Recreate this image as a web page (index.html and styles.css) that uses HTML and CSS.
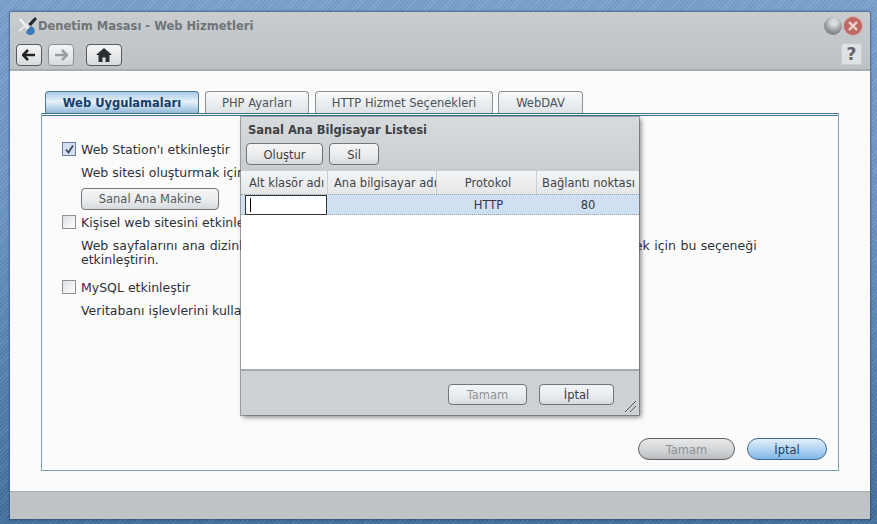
FILE: index.html
```html
<!DOCTYPE html>
<html lang="tr">
<head>
<meta charset="utf-8">
<title>Web Hizmetleri</title>
<link rel="stylesheet" href="styles.css">
</head>
<body>
<div class="window">
  <header class="head">
    <div class="titlebar">
      <svg class="logo" width="20" height="20" viewBox="0 0 20 20"><path d="M2 3l12 14" stroke="#f4f4f4" stroke-width="2.4"/><path d="M1 15L13 5" stroke="#e8e8e8" stroke-width="2"/><path d="M10 8l7-7 2 2-6 7z" fill="#23282e"/><path d="M9 14l4-4 3 2 1 4-3 3h-3l-3-2z" fill="#3f78b8"/></svg>
      <span class="title">Denetim Masası - Web Hizmetleri</span>
      <span class="spacer"></span>
      <span class="orb orb-grey"></span>
      <span class="orb orb-red"><svg width="12" height="12" viewBox="0 0 12 12"><path d="M2 2l8 8M10 2l-8 8" stroke="#f0d4cf" stroke-width="2.4"/></svg></span>
    </div>
    <div class="toolbar">
      <button class="tool"><svg width="14" height="12" viewBox="0 0 14 12"><path d="M6 1L1 6l5 5M1.500 6H13" fill="none" stroke="#222" stroke-width="2.600"/></svg></button>
      <button class="tool tool-off"><svg width="14" height="12" viewBox="0 0 14 12"><path d="M8 1l5 5-5 5M12.500 6H1" fill="none" stroke="#9a9ea2" stroke-width="2.600"/></svg></button>
      <button class="tool tool-home"><svg width="16" height="14" viewBox="0 0 16 14"><path d="M8 0L0 7h2.500v7h4V9.500h3V14h4V7H16z" fill="#2a2e32"/></svg></button>
      <span class="spacer"></span>
      <button class="help">?</button>
    </div>
  </header>
  <main class="content">
    <nav class="tabs">
      <span class="tab tab-on">Web Uygulamaları</span>
      <span class="tab tab-php">PHP Ayarları</span>
      <span class="tab tab-http">HTTP Hizmet Seçenekleri</span>
      <span class="tab tab-dav">WebDAV</span>
    </nav>
    <section class="panel">
      <div class="form">
        <label class="check"><span class="box box-on"><svg width="11" height="11" viewBox="0 0 11 11"><path d="M2 5.500l2.500 3L9 1.500" fill="none" stroke="#3b4a63" stroke-width="1.800"/></svg></span>Web Station'ı etkinleştir</label>
        <p class="line">Web sitesi oluşturmak için</p>
        <button class="btn btn-host">Sanal Ana Makine</button>
        <label class="check check-2"><span class="box"></span>Kişisel web sitesini etkinleştir</label>
        <p class="para">Web sayfalarını ana dizinlerinde yayınlamak için sistemdeki yerel kullanıcılara izin vermek için bu seçeneği<br>etkinleştirin.</p>
        <label class="check check-3"><span class="box"></span>MySQL etkinleştir</label>
        <p class="line">Veritabanı işlevlerini kullanmak için</p>
      </div>
      <div class="actions">
        <button class="pill pill-off">Tamam</button>
        <button class="pill pill-on">İptal</button>
      </div>
    </section>
  </main>
  <footer class="foot"></footer>
</div>

<div class="dialog">
  <div class="dlg-head">
    <div class="dlg-title">Sanal Ana Bilgisayar Listesi</div>
    <div class="dlg-tools">
      <button class="btn btn-create">Oluştur</button>
      <button class="btn btn-del">Sil</button>
    </div>
  </div>
  <div class="grid grid-head">
    <span class="cell cell-first">Alt klasör adı</span>
    <span class="cell">Ana bilgisayar adı</span>
    <span class="cell cell-c cell-proto">Protokol</span>
    <span class="cell cell-last">Bağlantı noktası</span>
  </div>
  <div class="grid grid-row">
    <span class="edit"><i class="caret"></i></span>
    <span></span>
    <span class="cell-c cell-proto">HTTP</span>
    <span class="cell-c">80</span>
  </div>
  <div class="dlg-body"></div>
  <div class="dlg-foot">
    <button class="btn btn-ok">Tamam</button>
    <button class="btn btn-cancel">İptal</button>
    <svg class="grip" width="11" height="11" viewBox="0 0 11 11"><path d="M0 11L11 0M5 11l6-6" stroke="#555" stroke-width="1"/></svg>
  </div>
</div>
</body>
</html>
```

FILE: styles.css
```css
* { box-sizing: border-box; }
html, body { margin: 0; height: 100%; }
body {
  position: relative;
  width: 877px;
  height: 524px;
  overflow: hidden;
  font-family: "DejaVu Sans", sans-serif;
  font-size: 12.500px;
  color: #2c3238;
  background:
    repeating-linear-gradient(135deg, rgba(255, 255, 255, .07) 0 1px, rgba(0, 0, 0, .05) 1px 3px),
    linear-gradient(180deg, #7ba3d1 0%, #6d97c8 40%, #44719f 100%);
}
button { font: inherit; margin: 0; padding: 0; }
.spacer { flex: 1; }

.window {
  position: absolute;
  left: 10px;
  top: 12px;
  width: 860px;
  height: 507px;
  display: flex;
  flex-direction: column;
  border-radius: 3px 3px 0 0;
  background: #fbfbfb;
  box-shadow: 0 0 2px 1px rgba(40, 60, 90, .55);
  overflow: hidden;
}
.head {
  height: 59px;
  flex: none;
  background: linear-gradient(180deg, #c9cdd0, #bcc1c4);
  border-bottom: 2px solid #a9acaf;
}
.titlebar { height: 27px; display: flex; align-items: center; padding: 0 8px; }
.logo { flex: none; }
.title { font-size: 11.500px; font-weight: bold; color: #6f7478; }
.orb { width: 18px; height: 18px; border-radius: 50%; margin-left: 2px; display: flex; align-items: center; justify-content: center; }
.orb-grey { background: radial-gradient(circle at 55% 30%, #d8dadb 0 18%, #8d9194 60%, #73777b); }
.orb-red { background: radial-gradient(circle at 50% 50%, #c4706a, #b9625c); box-shadow: 0 0 0 1px #dda8a4; }
.toolbar { height: 30px; display: flex; align-items: flex-start; padding: 5px 8px 0 6px; }
.tool {
  width: 26px; height: 22px; margin-right: 6px;
  display: flex; align-items: center; justify-content: center;
  border: 1px solid #565a5e; border-radius: 4px;
  background: linear-gradient(180deg, #f4f5f6, #d8dbdd);
}
.tool-off { border-color: #8c9094; margin-right: 12px; }
.tool-home { width: 36px; }
.help {
  width: 21px; height: 22px; margin-top: -1px;
  border: 1px solid #c9cdd0; border-radius: 3px;
  background: #dfe2e5; color: #5e6368;
  font-size: 17px; font-weight: bold; line-height: 20px;
}

.content { flex: 1; display: flex; flex-direction: column; padding: 20px 31px; }
.tabs { height: 22px; flex: none; display: flex; padding-left: 4px; gap: 6px; }
.tab {
  height: 22px; display: flex; align-items: center; justify-content: center;
  border: 1px solid #8b9296; border-bottom: 0; border-radius: 4px 4px 0 0;
  background: linear-gradient(180deg, #f8f9fa, #dfe3e6);
  color: #4d5358; font-size: 11.500px;
}
.tab-on {
  width: 154px; border-color: #4a7a9a; color: #123f6c; font-weight: bold;
  background: linear-gradient(180deg, #aacbe6 0%, #e6f0f8 45%, #bcd6ea 75%, #8fb8d8 100%);
}
.tab-php { width: 104px; }
.tab-http { width: 178px; }
.tab-dav { width: 85px; margin-left: -1px; }
.panel {
  flex: 1; position: relative;
  border: 1px solid #7aa3b0; border-top: 3px double #3f7590;
  background: #fbfbfb;
  display: flex; flex-direction: column; justify-content: space-between;
}
.form { padding: 24px 40px 0 20px; }
.check { display: flex; align-items: center; height: 18px; margin: 0; }
.box {
  width: 14px; height: 14px; flex: none; margin-right: 5px;
  border: 1px solid #8b9095; background: linear-gradient(135deg, #dcdfe2, #fff);
  display: flex; align-items: center; justify-content: center;
}
.box-on { background: #d4dfef; border-color: #6d7f9c; }
.line { margin: 7px 0 0 19px; height: 16px; line-height: 16px; }
.para { margin: 8px 0 0 19px; line-height: 14px; word-spacing: .5px; }
.btn {
  display: flex; align-items: center; justify-content: center;
  border: 1px solid #70767b; border-radius: 4px;
  background: linear-gradient(180deg, #f4f5f6 0%, #e9ebed 60%, #d6dadd 100%);
  color: #3a3f44; font-size: 11.500px;
}
.btn-host { width: 138px; height: 22px; margin: 7px 0 0 19px; color: #55595e; }
.check-2 { margin-top: 3px; }
.check-3 { margin-top: 11px; }
.actions { display: flex; justify-content: flex-end; gap: 12px; padding: 0 11px 10px 0; }
.pill {
  height: 22px; padding-top: 1px; border: 1px solid #5d6266; border-radius: 11px; font-size: 11.500px;
}
.pill-off { width: 97px; color: #8c9195; background: linear-gradient(180deg, #e8e9ea, #d0d2d4 60%, #b9bcbf); }
.pill-on { width: 80px; color: #23425f; border-color: #3f6a8f; background: linear-gradient(180deg, #e0eefa, #a9d0f0 60%, #7fb6e6); }

.foot { height: 28px; flex: none; background: #bfc3c6; border-top: 1px solid #a8abad; }

.dialog {
  position: absolute;
  left: 241px; top: 117px;
  width: 398px; height: 298px;
  display: flex; flex-direction: column;
  background: #fff;
  box-shadow: 0 0 0 1px rgba(90, 96, 100, .55), 2px 2px 5px rgba(0, 0, 0, .5);
}
.dlg-head { height: 54px; flex: none; padding: 0 5px; background: linear-gradient(180deg, #d7dbde, #c8cdd1); }
.dlg-title { height: 26px; padding: 6px 2px 0; font-size: 11.500px; font-weight: bold; color: #3c4248; }
.dlg-tools { display: flex; gap: 6px; }
.dlg-tools .btn { height: 22px; padding-top: 2px; }
.btn-create { width: 77px; }
.btn-del { width: 50px; }
.grid { display: grid; grid-template-columns: 87px 109px 100px 1fr; flex: none; font-size: 11.500px; }
.grid-head { height: 23px; background: linear-gradient(180deg, #f4f5f6, #e4e6e8); color: #3f4448; }
.cell { display: flex; align-items: center; padding-left: 6px; white-space: nowrap; overflow: hidden; border-right: 1px solid #cdd0d2; }
.cell-first { padding-left: 8px; }
.cell-last { border-right: 0; padding-left: 5px; }
.cell-c { text-align: center; justify-content: center; }
.cell-proto { padding-left: 3px; }
.grid-row {
  height: 21px; align-items: center; line-height: 20px; background: #cfe0f3;
  border-top: 1px dotted #98a0a8; border-bottom: 1px dotted #98a0a8; color: #33383d;
}
.edit { width: 82px; height: 20px; margin-left: 4px; border: 1px solid #333; background: #fff; display: flex; align-items: center; padding-left: 4px; }
.caret { width: 1px; height: 14px; background: #000; }
.dlg-body { flex: 1; background: #fff; border-bottom: 2px solid #a9acaf; }
.dlg-foot { position: relative; height: 44px; flex: none; display: flex; justify-content: flex-end; gap: 12px; padding: 13px 25px 0 0; background: #ccd1d5; }
.dlg-foot .btn { height: 21px; padding-top: 1px; }
.btn-ok { width: 79px; color: #8e9397; }
.btn-cancel { width: 75px; }
.grip { position: absolute; right: 3px; bottom: 3px; }
```
